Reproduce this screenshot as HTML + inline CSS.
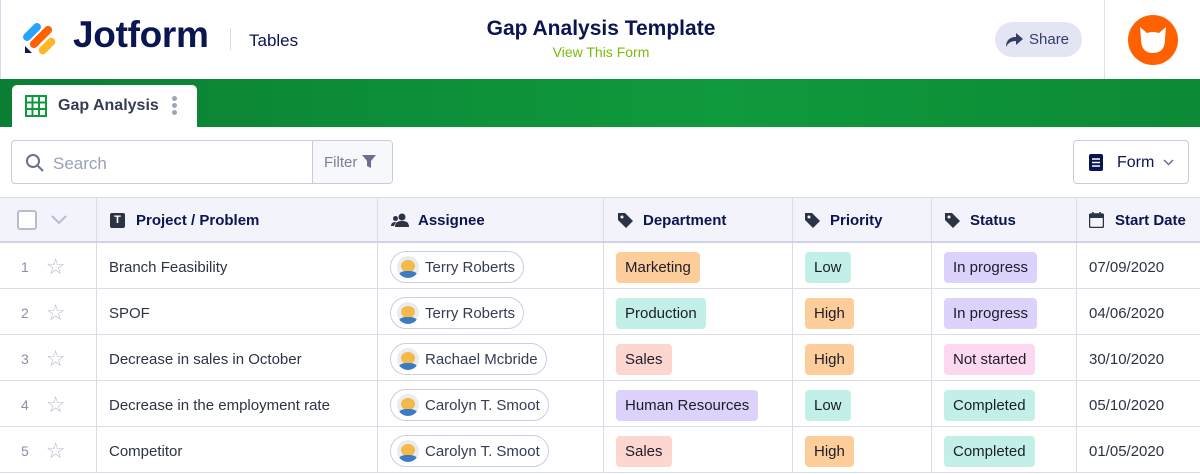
<!DOCTYPE html>
<html><head><meta charset="utf-8"><style>
*{box-sizing:border-box;margin:0;padding:0}
body{width:1200px;height:474px;overflow:hidden;font-family:"Liberation Sans",sans-serif;background:#fff;position:relative;color:#343c6a}
.a{position:absolute}
.hdr{left:0;top:0;width:1200px;height:79px;background:#fff;border-left:1px solid #d6d8ec}
.green{left:0;top:79px;width:1200px;height:48px;background:linear-gradient(90deg,#0a7f34,#0f9a3c 60%,#0c8a35)}
.tab{left:12px;top:85px;width:185px;height:42px;background:#fff;border-radius:5px 5px 0 0}
.tb{left:0;top:127px;width:1200px;height:70px;background:#fff}
.t{position:absolute;top:197px;left:0;width:1200px}
.row{position:absolute;left:0;width:1200px;height:46px;border-bottom:1px solid #dadcea}
.c{position:absolute;top:0;height:100%;border-right:1px solid #dadcea;display:flex;align-items:center;font-size:15px;color:#2c3345;padding-top:3px}
.h .c{font-weight:bold;color:#0a1551;background:#f3f4fb;padding-top:1px}
.b{padding:0 9px;height:31px;line-height:32px;border-radius:4px;font-size:15px;color:#1c1c2a}
.pill{border:1px solid #c9cde8;border-radius:16px;height:32px;display:flex;align-items:center;padding:0 8px 0 6px;font-size:15px;color:#343c55}
.av{width:22px;height:22px;border-radius:50%;background:#e9ecef;margin-right:6px;position:relative;overflow:hidden}
.av:before{content:"";position:absolute;left:4px;top:4px;width:14px;height:12px;background:#f3b949;border-radius:50%}
.av:after{content:"";position:absolute;left:2px;top:15px;width:18px;height:10px;background:#3a7bc4;border-radius:40%}
.n{color:#8a8fa8;font-size:14px}
</style></head><body>
<div class="a hdr">
 <svg class="a" style="left:22px;top:20px" width="34" height="36" viewBox="0 0 34 36">
  <rect x="-2" y="8" width="22" height="8" rx="4" fill="#2aa3ff" transform="rotate(-45 9 12)"/>
  <rect x="4" y="13" width="28" height="8" rx="4" fill="#ff6100" transform="rotate(-45 18 17)"/>
  <rect x="14" y="22" width="20" height="8" rx="4" fill="#ffb629" transform="rotate(-45 24 26)"/>
  <path d="M2 26 L2 33 L9 33 Z" fill="#0a1551"/>
 </svg>
 <div class="a" style="left:72px;top:14px;font-size:37px;font-weight:bold;color:#0a1551;letter-spacing:-0.3px">Jotform</div>
 <div class="a" style="left:229px;top:28px;width:1px;height:22px;background:#d6d8ec"></div>
 <div class="a" style="left:248px;top:31px;font-size:17px;color:#0a1551">Tables</div>
 <div class="a" style="left:400px;width:400px;top:17px;text-align:center;font-size:21px;font-weight:bold;color:#0a1551">Gap Analysis Template</div>
 <div class="a" style="left:400px;width:400px;top:44px;text-align:center;font-size:14px;color:#78bb07">View This Form</div>
 <div class="a" style="left:994px;top:22px;width:87px;height:35px;border-radius:18px;background:#e3e5f5;font-size:15px;color:#343c6a;display:flex;align-items:center;padding-left:10px">
  <svg width="18" height="14" viewBox="0 0 18 14"><path d="M11 0 L18 6 L11 12 L11 8 C6 8 3 10 1 14 C1 8 4 4 11 4 Z" fill="#343c6a"/></svg><span style="margin-left:6px">Share</span></div>
 <div class="a" style="left:1103px;top:0;width:1px;height:79px;background:#e0e2f0"></div>
 <div class="a" style="left:1127px;top:15px;width:50px;height:50px;border-radius:50%;background:#ff6100"></div>
 <svg class="a" style="left:1136px;top:25px" width="32" height="30" viewBox="0 0 32 30"><path d="M3 2 L10 8 Q16 6 22 8 L29 2 L28 14 Q28 28 16 28 Q4 28 4 14 Z" fill="#fff"/></svg>
</div>
<div class="a green"></div>
<div class="a tab">
 <svg class="a" style="left:13px;top:10px" width="22" height="22" viewBox="0 0 22 22"><rect x="1" y="1" width="20" height="20" fill="none" stroke="#0f9a3c" stroke-width="2"/><path d="M1 7.5H21M1 14H21M7.5 1V21M14 1V21" stroke="#0f9a3c" stroke-width="2"/></svg>
 <div class="a" style="left:46px;top:12px;font-size:16px;font-weight:bold;color:#343c55">Gap Analysis</div>
 <div class="a" style="left:160px;top:11px;width:5px;height:5px;border-radius:50%;background:#a0a4bb;box-shadow:0 7px 0 #a0a4bb,0 14px 0 #a0a4bb"></div>
</div>
<div class="a tb">
 <div class="a" style="left:11px;top:13px;width:382px;height:44px;border:1px solid #c8cbe0;border-radius:4px;overflow:hidden">
  <svg class="a" style="left:13px;top:12px" width="20" height="20" viewBox="0 0 20 20"><circle cx="8" cy="8" r="6" fill="none" stroke="#6b7090" stroke-width="2"/><path d="M12.5 12.5L18 18" stroke="#6b7090" stroke-width="2"/></svg>
  <div class="a" style="left:41px;top:13px;font-size:17px;color:#9a9fb8">Search</div>
  <div class="a" style="left:300px;top:0;width:80px;height:42px;border-left:1px solid #c8cbe0;background:#f7f8fc;font-size:15px;color:#7a7f9a;padding:13px 0 0 11px">Filter <svg width="14" height="13" viewBox="0 0 14 13" style="vertical-align:-1px"><path d="M0 0H14L9 6V13L5 11V6Z" fill="#6b7090"/></svg></div>
 </div>
 <div class="a" style="left:1073px;top:13px;width:116px;height:44px;border:1px solid #c8cbe0;border-radius:4px">
  <svg class="a" style="left:15px;top:13px" width="14" height="17" viewBox="0 0 14 17"><rect width="14" height="17" rx="2" fill="#0a1551"/><path d="M3 5H11M3 8.5H11M3 12H11" stroke="#fff" stroke-width="1.5"/></svg>
  <div class="a" style="left:43px;top:13px;font-size:16px;color:#0a1551">Form</div>
  <svg class="a" style="left:89px;top:18px" width="11" height="7" viewBox="0 0 11 7"><path d="M1 1L5.5 5.5L10 1" fill="none" stroke="#6b7090" stroke-width="1.5"/></svg>
 </div>
</div>
<div class="t">
 <div class="row h" style="top:0;height:46px;border-top:1px solid #dadcea;border-bottom:2px solid #d0d3e6">
  <div class="c" style="left:0;width:97px"><span style="margin-left:17px;width:20px;height:20px;border:2px solid #b8bccf;border-radius:3px;background:#fff"></span><svg style="margin-left:14px" width="16" height="10" viewBox="0 0 16 10"><path d="M1 1L8 8L15 1" fill="none" stroke="#b8bccf" stroke-width="2"/></svg></div>
  <div class="c" style="left:97px;width:281px"><span style="margin-left:13px;width:15px;height:15px;background:#2c3345;border-radius:2px;color:#fff;font-size:11px;text-align:center;line-height:15px">T</span><span style="margin-left:11px">Project / Problem</span></div>
  <div class="c" style="left:378px;width:226px"><svg style="margin-left:13px" width="18" height="14" viewBox="0 0 18 14"><circle cx="11" cy="4" r="3.5" fill="#2c3345"/><path d="M4 14C4 9 7 8 11 8C15 8 18 9 18 14Z" fill="#2c3345"/><circle cx="4.5" cy="5.5" r="2.5" fill="#2c3345"/><path d="M0 13C0 10 2 9 5 9L3 13Z" fill="#2c3345"/></svg><span style="margin-left:9px">Assignee</span></div>
  <div class="c" style="left:604px;width:189px"><svg style="margin-left:13px" width="17" height="17" viewBox="0 0 17 17"><path d="M1 1H8L16 9L9 16L1 8Z" fill="#2c3345"/><circle cx="5" cy="5" r="1.5" fill="#f3f4fb"/></svg><span style="margin-left:9px">Department</span></div>
  <div class="c" style="left:793px;width:139px"><svg style="margin-left:11px" width="17" height="17" viewBox="0 0 17 17"><path d="M1 1H8L16 9L9 16L1 8Z" fill="#2c3345"/><circle cx="5" cy="5" r="1.5" fill="#f3f4fb"/></svg><span style="margin-left:9px">Priority</span></div>
  <div class="c" style="left:932px;width:145px"><svg style="margin-left:12px" width="17" height="17" viewBox="0 0 17 17"><path d="M1 1H8L16 9L9 16L1 8Z" fill="#2c3345"/><circle cx="5" cy="5" r="1.5" fill="#f3f4fb"/></svg><span style="margin-left:9px">Status</span></div>
  <div class="c" style="left:1077px;width:123px;border-right:none"><svg style="margin-left:12px" width="15" height="16" viewBox="0 0 15 16"><rect x="0.5" y="2" width="14" height="13.5" rx="1.5" fill="none" stroke="#2c3345" stroke-width="1.5"/><rect x="0.5" y="2" width="14" height="4" fill="#2c3345"/><path d="M4 0V3M11 0V3" stroke="#2c3345" stroke-width="1.5"/></svg><span style="margin-left:11px">Start Date</span></div>
 </div>
</div>
<div class="t" style="top:243px">
 <div class="row" style="top:0"><div class="c n" style="left:0;width:97px"><span style="margin-left:21px">1</span><span style="margin-left:17px;font-size:22px;color:#b8bccf">☆</span></div><div class="c" style="left:97px;width:281px"><span style="margin-left:12px">Branch Feasibility</span></div><div class="c" style="left:378px;width:226px"><div class="pill" style="margin-left:12px"><span class="av"></span>Terry Roberts</div></div><div class="c" style="left:604px;width:189px"><span class="b" style="margin-left:12px;background:#fdcd9a">Marketing</span></div><div class="c" style="left:793px;width:139px"><span class="b" style="margin-left:12px;background:#c2f0e9">Low</span></div><div class="c" style="left:932px;width:145px"><span class="b" style="margin-left:12px;background:#ddd2fb">In progress</span></div><div class="c" style="left:1077px;width:123px;border-right:none"><span style="margin-left:12px">07/09/2020</span></div></div>
 <div class="row" style="top:46px"><div class="c n" style="left:0;width:97px"><span style="margin-left:21px">2</span><span style="margin-left:17px;font-size:22px;color:#b8bccf">☆</span></div><div class="c" style="left:97px;width:281px"><span style="margin-left:12px">SPOF</span></div><div class="c" style="left:378px;width:226px"><div class="pill" style="margin-left:12px"><span class="av"></span>Terry Roberts</div></div><div class="c" style="left:604px;width:189px"><span class="b" style="margin-left:12px;background:#c2f0e9">Production</span></div><div class="c" style="left:793px;width:139px"><span class="b" style="margin-left:12px;background:#fdcd9a">High</span></div><div class="c" style="left:932px;width:145px"><span class="b" style="margin-left:12px;background:#ddd2fb">In progress</span></div><div class="c" style="left:1077px;width:123px;border-right:none"><span style="margin-left:12px">04/06/2020</span></div></div>
 <div class="row" style="top:92px"><div class="c n" style="left:0;width:97px"><span style="margin-left:21px">3</span><span style="margin-left:17px;font-size:22px;color:#b8bccf">☆</span></div><div class="c" style="left:97px;width:281px"><span style="margin-left:12px">Decrease in sales in October</span></div><div class="c" style="left:378px;width:226px"><div class="pill" style="margin-left:12px"><span class="av"></span>Rachael Mcbride</div></div><div class="c" style="left:604px;width:189px"><span class="b" style="margin-left:12px;background:#fdd6d0">Sales</span></div><div class="c" style="left:793px;width:139px"><span class="b" style="margin-left:12px;background:#fdcd9a">High</span></div><div class="c" style="left:932px;width:145px"><span class="b" style="margin-left:12px;background:#fcd9f0">Not started</span></div><div class="c" style="left:1077px;width:123px;border-right:none"><span style="margin-left:12px">30/10/2020</span></div></div>
 <div class="row" style="top:138px"><div class="c n" style="left:0;width:97px"><span style="margin-left:21px">4</span><span style="margin-left:17px;font-size:22px;color:#b8bccf">☆</span></div><div class="c" style="left:97px;width:281px"><span style="margin-left:12px">Decrease in the employment rate</span></div><div class="c" style="left:378px;width:226px"><div class="pill" style="margin-left:12px"><span class="av"></span>Carolyn T. Smoot</div></div><div class="c" style="left:604px;width:189px"><span class="b" style="margin-left:12px;background:#ddd2fb">Human Resources</span></div><div class="c" style="left:793px;width:139px"><span class="b" style="margin-left:12px;background:#c2f0e9">Low</span></div><div class="c" style="left:932px;width:145px"><span class="b" style="margin-left:12px;background:#c2f0e9">Completed</span></div><div class="c" style="left:1077px;width:123px;border-right:none"><span style="margin-left:12px">05/10/2020</span></div></div>
 <div class="row" style="top:184px"><div class="c n" style="left:0;width:97px"><span style="margin-left:21px">5</span><span style="margin-left:17px;font-size:22px;color:#b8bccf">☆</span></div><div class="c" style="left:97px;width:281px"><span style="margin-left:12px">Competitor</span></div><div class="c" style="left:378px;width:226px"><div class="pill" style="margin-left:12px"><span class="av"></span>Carolyn T. Smoot</div></div><div class="c" style="left:604px;width:189px"><span class="b" style="margin-left:12px;background:#fdd6d0">Sales</span></div><div class="c" style="left:793px;width:139px"><span class="b" style="margin-left:12px;background:#fdcd9a">High</span></div><div class="c" style="left:932px;width:145px"><span class="b" style="margin-left:12px;background:#c2f0e9">Completed</span></div><div class="c" style="left:1077px;width:123px;border-right:none"><span style="margin-left:12px">01/05/2020</span></div></div>
</div>
</body></html>
